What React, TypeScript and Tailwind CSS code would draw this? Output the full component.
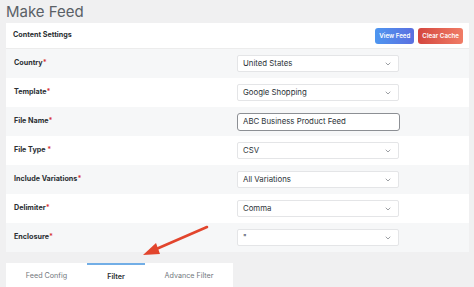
import { ChevronDown } from "lucide-react";

/* ================= DATA ================= */

type Row = {
  label: string;
  value: string;
  kind: "select" | "input";
  spaced?: boolean;
};

const ROWS: Row[] = [
  { label: "Country", value: "United States", kind: "select" },
  { label: "Template", value: "Google Shopping", kind: "select" },
  { label: "File Name", value: "ABC Business Product Feed", kind: "input" },
  { label: "File Type", value: "CSV", kind: "select", spaced: true },
  { label: "Include Variations", value: "All Variations", kind: "select" },
  { label: "Delimiter", value: "Comma", kind: "select" },
  { label: "Enclosure", value: '"', kind: "select" },
];

/* ================= UI COMPONENTS ================= */

function Field({ row }: { row: Row }) {
  if (row.kind === "input") {
    return (
      <div className="flex h-[18px] w-[163px] items-center rounded-[3px] border border-[#8c8f94] bg-white px-[5px] text-[7.8px] text-[#2c3338]">
        {row.value}
      </div>
    );
  }

  return (
    <div className="flex h-[17px] w-[162px] items-center justify-between rounded-[2px] border border-[#e4e5e7] bg-white pl-[5px] pr-[6px] text-[7.8px] text-[#2c3338]">
      <span>{row.value}</span>
      <ChevronDown size={8} strokeWidth={2} className="text-[#6b7075]" />
    </div>
  );
}

function SettingRow({ row, index }: { row: Row; index: number }) {
  return (
    <div
      className={
        index % 2 === 0
          ? "flex h-[29px] items-center bg-[#f6f7f8]"
          : "flex h-[29px] items-center bg-white"
      }
    >
      <div className="w-[231px] pl-[8px] text-[7.2px] font-bold text-[#2b2f33]">
        {row.label}
        {row.spaced ? " " : ""}
        <span className="text-[#d63638]">*</span>
      </div>
      <Field row={row} />
    </div>
  );
}

function Arrow() {
  return (
    <svg
      className="pointer-events-none absolute left-0 top-0"
      width="474"
      height="287"
      viewBox="0 0 474 287"
    >
      <line x1="207" y1="227" x2="154" y2="250" stroke="#e2452d" strokeWidth="2.6" strokeLinecap="round" />
      <polygon points="143,255 156,243 160,254" fill="#e2452d" />
    </svg>
  );
}

/* ================= COMPONENT ================= */

export default function App() {
  return (
    <div
      className="relative h-[287px] w-[474px] overflow-hidden bg-[#f0f0f1]"
      style={{ fontFamily: "Inter, 'Liberation Sans', sans-serif" }}
    >
      <h1 className="pl-[6px] pt-[2px] text-[15px] leading-[20px] text-[#5a6066]">
        Make Feed
      </h1>

      <div className="mx-[6px] mt-[1px] w-[463px] bg-white">
        <div className="flex h-[26px] items-center justify-between border-b border-[#ececec] pl-[7px] pr-[6px]">
          <span className="text-[7.2px] font-bold text-[#2b2f33]">Content Settings</span>
          <div className="flex gap-[4px]">
            <span className="flex h-[16px] items-center rounded-[3px] bg-gradient-to-r from-[#4d96f0] to-[#5a6fe0] px-[4px] text-[6.2px] font-semibold text-white">
              View Feed
            </span>
            <span className="flex h-[16px] items-center rounded-[3px] bg-gradient-to-r from-[#d4463f] to-[#f07c66] px-[4px] text-[6.2px] font-semibold text-white">
              Clear Cache
            </span>
          </div>
        </div>

        {ROWS.map((row, i) => (
          <SettingRow key={row.label} row={row} index={i} />
        ))}
      </div>

      <div className="ml-[6px] mt-[11px] flex h-[27px] w-[227px] bg-white text-[7.2px]">
        <div className="flex w-[81px] items-center justify-center text-[#72777c]">Feed Config</div>
        <div className="flex w-[58px] items-center justify-center border-t-2 border-[#72aee6] bg-white font-semibold text-[#2b2f33]">
          Filter
        </div>
        <div className="flex flex-1 items-center justify-center text-[#72777c]">Advance Filter</div>
      </div>

      <Arrow />
    </div>
  );
}
